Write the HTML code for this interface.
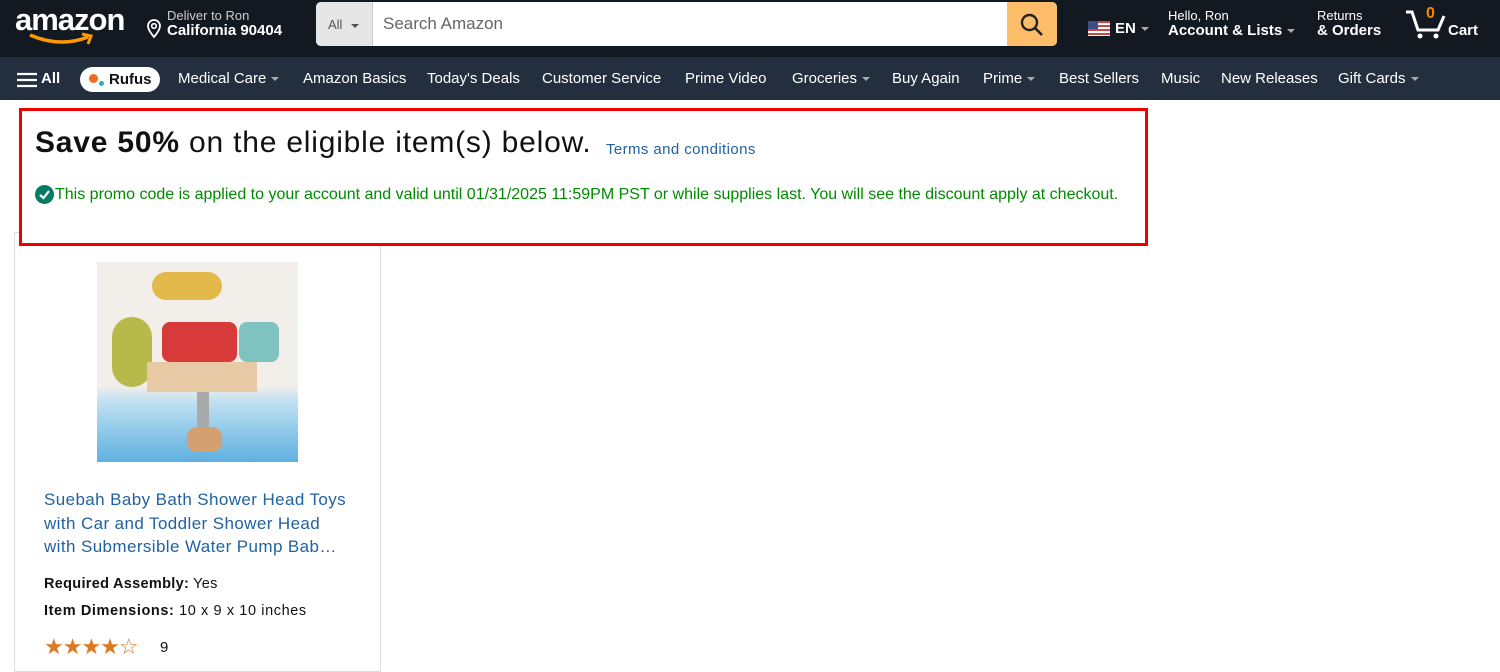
<!DOCTYPE html>
<html><head><meta charset="utf-8"><style>
*{margin:0;padding:0;box-sizing:border-box}
body{width:1500px;height:658px;overflow:hidden;background:#fff;font-family:"Liberation Sans","DejaVu Sans",sans-serif;position:relative}
.a{position:absolute;white-space:nowrap}
.top{position:absolute;left:0;top:0;width:1500px;height:57px;background:#131921;color:#fff}
.nav{position:absolute;left:0;top:57px;width:1500px;height:43px;background:#232f3e;color:#fff;font-size:15px;font-weight:bold}
.nav span{position:absolute;top:13px}
.car{display:inline-block;border-left:4px solid transparent;border-right:4px solid transparent;border-top:4px solid #aaa;margin-left:5px;vertical-align:middle}
</style></head><body>
<div class="top">
 <div class="a" style="left:15px;top:2px;font-size:31px;font-weight:bold;letter-spacing:-1px">amazon</div>
 <svg class="a" style="left:28px;top:32px" width="70" height="16"><path d="M2 3 Q32 16 60 5" stroke="#f90" stroke-width="3.5" fill="none"/><path d="M54 2 L63 4 L60 12" stroke="#f90" stroke-width="3" fill="none"/></svg>
 <svg class="a" style="left:146px;top:19px" width="16" height="20"><path d="M8 18 C2 11 2 8 2 7 A6 6 0 0 1 14 7 C14 8 14 11 8 18Z" stroke="#fff" stroke-width="1.8" fill="none"/><circle cx="8" cy="7" r="2.3" stroke="#fff" stroke-width="1.6" fill="none"/></svg>
 <div class="a" style="left:167px;top:8px;font-size:13px;color:#ccc">Deliver to Ron</div>
 <div class="a" style="left:167px;top:22px;font-size:15px;font-weight:bold">California 90404</div>
 <div class="a" style="left:316px;top:2px;width:741px;height:44px;background:#fff;border-radius:5px;overflow:hidden">
  <div class="a" style="left:0;top:0;width:57px;height:44px;background:#e6e6e6;border-right:1px solid #ccc;color:#555;font-size:13px;padding:15px 0 0 12px">All <span class="car" style="border-top-color:#555"></span></div>
  <div class="a" style="left:67px;top:12px;font-size:17px;color:#666">Search Amazon</div>
  <div class="a" style="left:691px;top:0;width:50px;height:44px;background:#febd69"><svg style="margin:11px 0 0 13px" width="24" height="24"><circle cx="9.5" cy="9.5" r="7.5" stroke="#222" stroke-width="2.4" fill="none"/><path d="M15 15 L22 22" stroke="#222" stroke-width="2.6"/></svg></div>
 </div>
 <div class="a" style="left:1088px;top:21px;width:22px;height:15px;background:repeating-linear-gradient(#c44 0 2px,#fff 2px 4px)"><div style="width:10px;height:8px;background:#3c4d8a"></div></div>
 <div class="a" style="left:1115px;top:20px;font-size:15px;font-weight:bold">EN<span class="car"></span></div>
 <div class="a" style="left:1168px;top:8px;font-size:13px">Hello, Ron</div>
 <div class="a" style="left:1168px;top:22px;font-size:15px;font-weight:bold">Account &amp; Lists<span class="car"></span></div>
 <div class="a" style="left:1317px;top:8px;font-size:13px">Returns</div>
 <div class="a" style="left:1317px;top:22px;font-size:15px;font-weight:bold">&amp; Orders</div>
 <svg class="a" style="left:1404px;top:8px" width="44" height="32"><path d="M2 4 L8 4 L14 22 L34 22 L40 8" stroke="#fff" stroke-width="3" fill="none"/><circle cx="16" cy="28" r="2.5" fill="#fff"/><circle cx="32" cy="28" r="2.5" fill="#fff"/></svg>
 <div class="a" style="left:1426px;top:5px;font-size:16px;font-weight:bold;color:#f08804">0</div>
 <div class="a" style="left:1448px;top:22px;font-size:15px;font-weight:bold">Cart</div>
</div>
<div class="nav">
 <svg class="a" style="left:17px;top:15px" width="20" height="16"><path d="M0 2H20M0 8H20M0 14H20" stroke="#fff" stroke-width="2.2"/></svg>
 <span style="left:41px">All</span>
 <div class="a" style="left:80px;top:10px;width:80px;height:25px;background:#fff;border-radius:13px;color:#111"><div class="a" style="left:9px;top:7px;width:9px;height:9px;background:#f36b21;border-radius:50%"></div><div class="a" style="left:19px;top:14px;width:5px;height:5px;background:#3aa8c1;border-radius:50%"></div><span style="left:29px;top:4px;font-size:15px">Rufus</span></div>
 <span style="left:178px;font-weight:normal">Medical Care<i class="car"></i></span>
 <span style="left:303px;font-weight:normal">Amazon Basics</span>
 <span style="left:427px;font-weight:normal">Today's Deals</span>
 <span style="left:542px;font-weight:normal">Customer Service</span>
 <span style="left:685px;font-weight:normal">Prime Video</span>
 <span style="left:792px;font-weight:normal">Groceries<i class="car"></i></span>
 <span style="left:892px;font-weight:normal">Buy Again</span>
 <span style="left:983px;font-weight:normal">Prime<i class="car"></i></span>
 <span style="left:1059px;font-weight:normal">Best Sellers</span>
 <span style="left:1161px;font-weight:normal">Music</span>
 <span style="left:1221px;font-weight:normal">New Releases</span>
 <span style="left:1338px;font-weight:normal">Gift Cards<i class="car"></i></span>
</div>
<div class="a" style="left:14px;top:232px;width:367px;height:440px;border:1px solid #ddd"></div>
<div class="a" style="left:19px;top:108px;width:1129px;height:138px;border:3px solid #e00;background:#fff"></div>
<div class="a" style="left:35px;top:126px;font-size:30px;letter-spacing:0.8px;color:#111"><b>Save 50%</b> on the eligible item(s) below.</div>
<div class="a" style="left:606px;top:141px;font-size:15px;letter-spacing:0.4px;color:#2162a1">Terms and conditions</div>
<svg class="a" style="left:35px;top:185px" width="19" height="19"><circle cx="9.5" cy="9.5" r="9.5" fill="#067d62"/><path d="M5 10 L8.5 13 L14 6" stroke="#fff" stroke-width="2.2" fill="none"/></svg>
<div class="a" style="left:55px;top:186px;font-size:16px;color:#008a00">This promo code is applied to your account and valid until 01/31/2025 11:59PM PST or while supplies last. You will see the discount apply at checkout.</div>
<div class="a" style="left:97px;top:262px;width:201px;height:200px;background:linear-gradient(#f2eeea 0 62%,#bfe0f2 70%,#5fb0e0 100%)">
 <div class="a" style="left:55px;top:10px;width:70px;height:28px;background:#e2b94a;border-radius:14px"></div>
 <div class="a" style="left:15px;top:55px;width:40px;height:70px;background:#b7b94a;border-radius:20px"></div>
 <div class="a" style="left:65px;top:60px;width:75px;height:40px;background:#d83a3a;border-radius:8px"></div>
 <div class="a" style="left:50px;top:100px;width:110px;height:30px;background:#e8c9a5"></div>
 <div class="a" style="left:142px;top:60px;width:40px;height:40px;background:#7fc3c0;border-radius:8px"></div>
 <div class="a" style="left:100px;top:130px;width:12px;height:50px;background:#aaa"></div>
 <div class="a" style="left:90px;top:165px;width:35px;height:25px;background:#d4a070;border-radius:10px"></div>
</div>
<div class="a" style="left:44px;top:488px;font-size:17px;line-height:23.5px;letter-spacing:0.4px;color:#2162a1">Suebah Baby Bath Shower Head Toys<br>with Car and Toddler Shower Head<br>with Submersible Water Pump Bab…</div>
<div class="a" style="left:44px;top:576px;font-size:14.5px;letter-spacing:0.3px;color:#111"><b>Required Assembly:</b> Yes</div>
<div class="a" style="left:44px;top:603px;font-size:14.5px;letter-spacing:0.6px;color:#111"><b>Item Dimensions:</b> 10 x 9 x 10 inches</div>
<div class="a" style="left:44px;top:634px;font-size:22px;color:#de7921;letter-spacing:-1px">★★★★☆</div>
<div class="a" style="left:160px;top:639px;font-size:15px;color:#111">9</div>
</body></html>
